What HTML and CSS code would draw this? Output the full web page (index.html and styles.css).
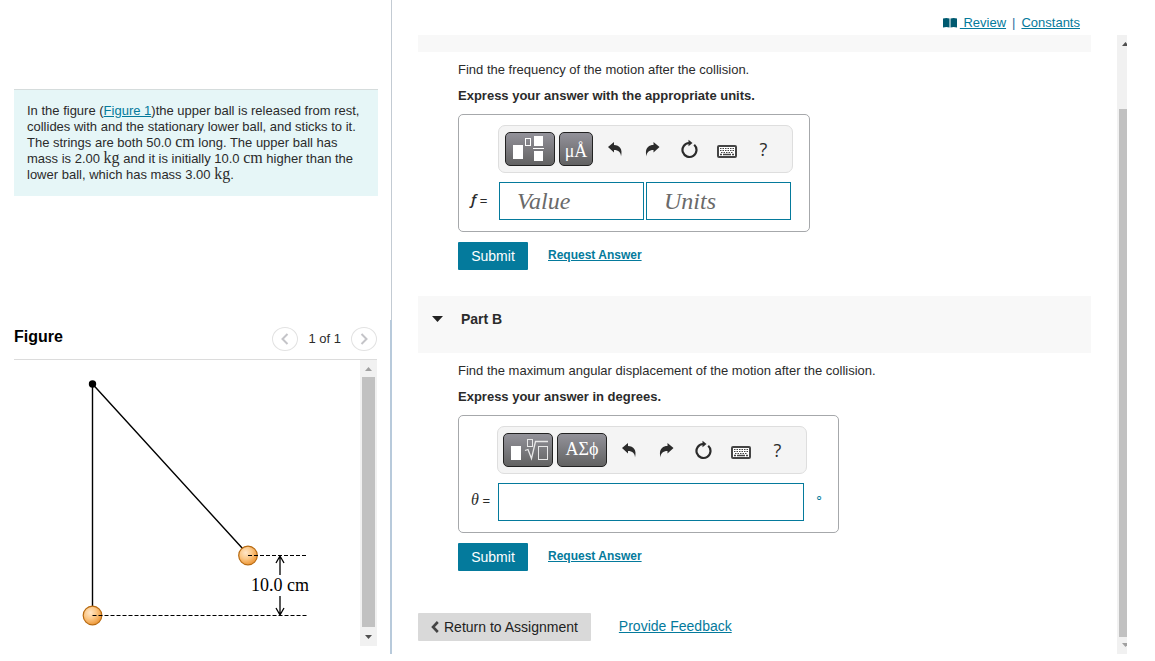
FILE: index.html
```html
<!DOCTYPE html>
<html lang="en">
<head>
    <meta charset="UTF-8">
    <meta name="viewport" content="width=device-width, initial-scale=1.0">
    <title>Assignment - Part B</title>
    <link rel="stylesheet" href="styles.css">
</head>
<body>
    <!-- Shared toolbar icons -->
    <svg class="sprite" aria-hidden="true">
        <symbol id="icon-undo" viewBox="0 0 16 16">
            <path d="M0 6 L6 1 V4 C11.500 4 15 8 13 15.500 C13 11.500 10.500 9 6 9 V11.500 Z"/>
        </symbol>
        <symbol id="icon-redo" viewBox="0 0 16 16">
            <path d="M14.500 6 L8.500 1 V4 C3 4 -0.500 8 1.500 15.500 C1.500 11.500 4 9 8.500 9 V11.500 Z"/>
        </symbol>
        <symbol id="icon-reset" viewBox="0 0 18 20">
            <path d="M13.200 5.800 A7 7 0 1 1 8 4" fill="none" stroke="#2b2b2b" stroke-width="2.200"/>
            <path d="M7.500 0.800 L11.500 4 L7.500 7.200 Z"/>
        </symbol>
        <symbol id="icon-keyboard" viewBox="0 0 20 13">
            <rect x="1" y="1" width="18" height="11" rx="1" fill="#fff" stroke="#444" stroke-width="2"/>
            <path d="M3 3.500h14M3 5.500h14M4 7.500h12" stroke="#444" stroke-width="1.200" stroke-dasharray="1.500 1"/>
            <path d="M3 9.500h2M6 9.500h8M15 9.500h2" stroke="#444" stroke-width="1.500"/>
        </symbol>
    </svg>

    <div class="page">
        <aside class="sidebar">
            <div class="intro">
                <p class="problem">In the figure (<a href="#figure">Figure 1</a>)the upper ball is released from rest, collides with and the stationary lower ball, and sticks to it. The strings are both 50.0 <span class="unit">cm</span> long. The upper ball has mass is 2.00 <span class="unit">kg</span> and it is initially 10.0 <span class="unit">cm</span> higher than the lower ball, which has mass 3.00 <span class="unit">kg</span>.</p>
            </div>

            <section class="figure" id="figure">
                <header class="figure-header">
                    <h2>Figure</h2>
                    <div class="pager">
                        <button type="button" class="pager-btn" aria-label="Previous figure">
                            <svg width="8" height="12" viewBox="0 0 8 12"><path d="M6.500 1 L1.500 6 L6.500 11"/></svg>
                        </button>
                        <span>1 of 1</span>
                        <button type="button" class="pager-btn" aria-label="Next figure">
                            <svg width="8" height="12" viewBox="0 0 8 12"><path d="M1.500 1 L6.500 6 L1.500 11"/></svg>
                        </button>
                    </div>
                </header>
                <div class="figure-body">
                    <svg class="diagram" width="320" height="286" viewBox="0 0 320 286">
                        <defs>
                            <radialGradient id="ball" cx="0.38" cy="0.35" r="0.65">
                                <stop offset="0" stop-color="#ffe6c8"/>
                                <stop offset="0.5" stop-color="#fbc888"/>
                                <stop offset="1" stop-color="#ee9a3c"/>
                            </radialGradient>
                        </defs>
                        <!-- Strings -->
                        <path d="M78.500 24 V246 M78.500 24 L229 189" stroke="#000" stroke-width="1.400"/>
                        <circle cx="78.500" cy="24" r="3.700"/>
                        <!-- Balls -->
                        <circle cx="78.500" cy="255.500" r="9.300" fill="url(#ball)" stroke="#b86a10" stroke-width="1.200"/>
                        <circle cx="234" cy="195.500" r="9.300" fill="url(#ball)" stroke="#b86a10" stroke-width="1.200"/>
                        <path d="M234 195.500 H293 M78.500 255.500 H293" stroke="#000" stroke-width="1.200" stroke-dasharray="4 2"/>
                        <!-- Height marker -->
                        <path d="M266 196 V215 M262 203 L266 196 L270 203 M266 236 V255 M262 248 L266 255 L270 248" fill="none" stroke="#000" stroke-width="1.300"/>
                        <text x="266" y="231" text-anchor="middle">10.0 cm</text>
                    </svg>
                    <div class="scrollbar" aria-hidden="true">
                        <svg width="17" height="17" viewBox="0 0 17 17"><path d="M5 11 h7 l-3.500 -4 z" fill="#a0a0a0"/></svg>
                        <div class="thumb"></div>
                        <svg width="17" height="19" viewBox="0 0 17 19"><path d="M5 8 h7 l-3.500 4 z" fill="#505050"/></svg>
                    </div>
                </div>
            </section>
        </aside>

        <main class="main">
            <nav class="top-links">
                <svg width="14" height="10" viewBox="0 0 14 10"><path d="M0 0.500 Q3.500 -0.500 6.500 0.500 V9.500 Q3.500 8.500 0 9.500 Z M7.500 0.500 Q10.500 -0.500 14 0.500 V9.500 Q10.500 8.500 7.500 9.500 Z"/></svg>
                <a class="review" href="#review">&nbsp;Review</a>
                <span class="divider">|</span>
                <a href="#constants">Constants</a>
            </nav>

            <div class="scroll-area">
                <div class="content">
                    <div class="part-strip"></div>

                    <form class="part">
                        <p>Find the frequency of the motion after the collision.</p>
                        <p><strong>Express your answer with the appropriate units.</strong></p>
                        <div class="answer-box">
                            <div class="toolbar">
                                <button type="button" class="tool" aria-label="Templates">
                                    <svg width="34" height="28" viewBox="0 0 34 28">
                                        <path d="M0 10h10v14h-10z M21 1h9v10h-9z M21 16h9v10h-9z M20 13h11v1h-11z" fill="#fff"/>
                                        <rect x="12.500" y="3.500" width="5" height="7" fill="none" stroke="#fff"/>
                                    </svg>
                                </button>
                                <button type="button" class="tool tool-units">μÅ</button>
                                <div class="icons">
                                    <button type="button" aria-label="Undo"><svg width="16" height="16"><use href="#icon-undo"/></svg></button>
                                    <button type="button" aria-label="Redo"><svg width="16" height="16"><use href="#icon-redo"/></svg></button>
                                    <button type="button" aria-label="Reset"><svg width="18" height="20"><use href="#icon-reset"/></svg></button>
                                    <button type="button" aria-label="Keyboard shortcuts"><svg class="keyboard" width="20" height="13"><use href="#icon-keyboard"/></svg></button>
                                    <button type="button" aria-label="Help">?</button>
                                </div>
                            </div>
                            <label for="frequency"><i class="var">f</i> =</label>
                            <div class="fields">
                                <input type="text" id="frequency" class="quantity" placeholder="Value">
                                <input type="text" id="units" class="quantity" placeholder="Units" aria-label="Units">
                            </div>
                        </div>
                        <div class="actions">
                            <button type="submit" class="submit">Submit</button>
                            <a href="#answer-a">Request Answer</a>
                        </div>
                    </form>

                    <header class="part-header">
                        <svg width="12" height="6" viewBox="0 0 12 6"><path d="M0 0 H11 L5.500 6 Z" fill="#222"/></svg>
                        <h3>Part B</h3>
                    </header>

                    <form class="part">
                        <p>Find the maximum angular displacement of the motion after the collision.</p>
                        <p><strong>Express your answer in degrees.</strong></p>
                        <div class="answer-box answer-box-wide">
                            <div class="toolbar">
                                <button type="button" class="tool" aria-label="Math templates">
                                    <svg width="42" height="28" viewBox="0 0 42 28">
                                        <path d="M4 10h10v14h-10z" fill="#fff"/>
                                        <g fill="none" stroke="#e8e8e8">
                                            <rect x="20.500" y="3.500" width="5" height="7"/>
                                            <path d="M18 14.500 l3 -1 l3.500 9 l4 -17 H41" stroke-width="1.300"/>
                                            <rect x="31.500" y="10.500" width="9" height="13"/>
                                        </g>
                                    </svg>
                                </button>
                                <button type="button" class="tool tool-greek">ΑΣϕ</button>
                                <div class="icons">
                                    <button type="button" aria-label="Undo"><svg width="16" height="16"><use href="#icon-undo"/></svg></button>
                                    <button type="button" aria-label="Redo"><svg width="16" height="16"><use href="#icon-redo"/></svg></button>
                                    <button type="button" aria-label="Reset"><svg width="18" height="20"><use href="#icon-reset"/></svg></button>
                                    <button type="button" aria-label="Keyboard shortcuts"><svg class="keyboard" width="20" height="13"><use href="#icon-keyboard"/></svg></button>
                                    <button type="button" aria-label="Help">?</button>
                                </div>
                            </div>
                            <label for="theta"><i class="theta">θ</i> =</label>
                            <div class="fields">
                                <input type="text" id="theta" class="angle">
                                <span class="degree">∘</span>
                            </div>
                        </div>
                        <div class="actions">
                            <button type="submit" class="submit">Submit</button>
                            <a href="#answer-b">Request Answer</a>
                        </div>
                    </form>

                    <footer class="bottom">
                        <button type="button" class="return">
                            <svg width="8" height="12" viewBox="0 0 8 12"><path d="M6.800 1 L2 6 L6.800 11" fill="none" stroke="#444" stroke-width="2.600"/></svg>
                            Return to Assignment
                        </button>
                        <a href="#feedback">Provide Feedback</a>
                    </footer>
                </div>

                <div class="scrollbar scrollbar-main" aria-hidden="true">
                    <svg width="17" height="17" viewBox="0 0 17 17"><path d="M5 11 h7 l-3.500 -4 z" fill="#505050"/></svg>
                    <div class="track-gap"></div>
                    <div class="thumb"></div>
                    <svg width="17" height="17" viewBox="0 0 17 17"><path d="M5 6 h7 l-3.500 4 z" fill="#a0a0a0"/></svg>
                </div>
            </div>
        </main>
    </div>
</body>
</html>
```

FILE: styles.css
```css
* {
    box-sizing: border-box;
}

body {
    margin: 0;
    font-family: "Liberation Sans", Arial, sans-serif;
    font-size: 13px;
    line-height: 16px;
    color: #2b2b2b;
    background-color: #fff;
}

p, h2, h3 {
    margin: 0;
}

a {
    color: #047a9c;
}

button {
    font-family: inherit;
    padding: 0;
    border: none;
    cursor: pointer;
}

svg {
    display: block;
    flex-shrink: 0;
}

.sprite {
    position: absolute;
    width: 0;
    height: 0;
}

.page {
    display: flex;
    min-height: calc(100vh - 7px);
}

/* Left column */
.sidebar {
    display: flex;
    flex-direction: column;
    flex: 0 0 392px;
}

.intro {
    height: 320px;
    padding: 89px 13px 0 14px;
    border-right: 1px solid #c3cbd3;
}

.problem {
    padding: 13px 12px 13px 13px;
    border-top: 1px solid #d5dcdc;
    background-color: #e6f6f7;
}

.unit {
    font-family: "Liberation Serif", serif;
    font-size: 16px;
    line-height: 14px;
}

.figure {
    flex: 1;
    display: flex;
    flex-direction: column;
    padding: 0 13px 8px 14px;
    border-right: 2px solid #b8cadb;
}

.figure-header {
    display: flex;
    justify-content: space-between;
    height: 40px;
    padding-top: 7px;
    border-bottom: 1px solid #dcdcdc;
}

.figure-header h2 {
    font-size: 16px;
    line-height: 20px;
    color: #000;
}

.pager {
    display: flex;
    align-items: center;
    gap: 10px;
    height: 24px;
}

.pager-btn {
    display: flex;
    align-items: center;
    justify-content: center;
    width: 26px;
    height: 24px;
    border: 1px solid #e2e2e2;
    border-radius: 50%;
    background-color: #fff;
}

.pager-btn path {
    fill: none;
    stroke: #c4c4c8;
    stroke-width: 2;
}

.figure-body {
    display: flex;
    justify-content: space-between;
    flex: 1;
}

.diagram text {
    font-family: "Liberation Serif", serif;
    font-size: 18px;
}

.scrollbar {
    display: flex;
    flex-direction: column;
    width: 17px;
    overflow: hidden;
    background-color: #f1f1f1;
}

.thumb {
    flex: 1;
    margin: 0 2px;
    background-color: #c1c1c1;
}

/* Right column */
.main {
    flex: 1;
    display: flex;
    flex-direction: column;
    padding: 0 28px 0 26px;
}

.top-links {
    display: flex;
    align-items: center;
    justify-content: flex-end;
    height: 35px;
    padding: 10px 47px 0 0;
}

.top-links svg {
    margin-right: 3px;
    fill: #005a70;
}

.divider {
    margin: 0 6px;
    color: #2f6f9f;
}

.scroll-area {
    flex: 1;
    display: flex;
    gap: 26px;
}

.content {
    flex: 1;
}

.scrollbar-main {
    width: 10px;
}

.scrollbar-main .thumb {
    margin-right: 0;
}

.track-gap {
    height: 57px;
}

.part-strip {
    height: 17px;
    background-color: #f8f8f8;
}

.part-header {
    display: flex;
    align-items: center;
    gap: 17px;
    height: 57px;
    padding: 0 14px 11px 14px;
    background-color: #f8f8f8;
}

.part-header h3 {
    font-size: 14px;
    line-height: 16px;
}

.part {
    padding: 10px 0 26px 40px;
}

.part p {
    margin-bottom: 10px;
}

/* Answer box */
.answer-box {
    display: inline-grid;
    grid-template-columns: 39px auto;
    row-gap: 9px;
    padding: 10px 16px 11px 0;
    border: 1px solid #a6a8ab;
    border-radius: 5px;
    vertical-align: top;
}

.answer-box-wide {
    grid-template-columns: 38px auto;
    padding-right: 15px;
}

.answer-box label {
    height: 38px;
    padding-left: 12px;
    line-height: 34px;
    white-space: nowrap;
}

.var {
    font-family: "Open Sans", sans-serif;
    font-size: 15px;
    font-weight: 600;
}

.theta {
    font-family: "Liberation Serif", serif;
    font-size: 16px;
}

.toolbar {
    grid-column: 2;
    justify-self: start;
    display: flex;
    align-items: center;
    gap: 4px;
    height: 48px;
    padding: 0 10px 0 6px;
    border: 1px solid #dedede;
    border-radius: 7px;
    background-color: #f4f4f4;
}

.answer-box-wide .toolbar {
    padding-left: 5px;
}

.tool {
    display: flex;
    align-items: center;
    justify-content: center;
    width: 50px;
    height: 34px;
    border: 1px solid #222;
    border-radius: 5px;
    background-image: linear-gradient(#93929a, #626262);
    color: #fff;
    font-family: "Liberation Serif", serif;
    font-size: 18px;
}

.tool-units {
    width: 34px;
    padding-top: 4px;
}

.tool-greek {
    padding-bottom: 2px;
}

.icons {
    display: flex;
}

.icons button {
    display: flex;
    align-items: center;
    justify-content: center;
    width: 37px;
    height: 34px;
    background: none;
    color: #2b2b2b;
    font-family: "Open Sans", sans-serif;
    font-size: 18px;
}

.icons svg {
    fill: #2b2b2b;
}

.icons .keyboard {
    margin-top: 4px;
}

.fields {
    display: flex;
    gap: 2px;
    padding-left: 1px;
}

.fields input {
    height: 38px;
    padding: 0 17px;
    border: 1px solid #047a9c;
    border-radius: 0;
    background-color: #fff;
    font-family: "Liberation Serif", serif;
    font-size: 24px;
    font-style: italic;
}

.fields input::placeholder {
    color: #6a6a6a;
}

.quantity {
    width: 145px;
}

.angle {
    width: 306px;
}

.degree {
    padding: 6px 0 0 9px;
    color: #047a9c;
}

.actions {
    display: flex;
    gap: 20px;
    margin-top: 10px;
}

.actions a {
    font-size: 12px;
    font-weight: bold;
    line-height: 26px;
}

.submit {
    width: 70px;
    height: 28px;
    border-radius: 1px;
    background-color: #047a9c;
    color: #fff;
    font-size: 14px;
}

.bottom {
    display: flex;
    gap: 28px;
    padding-top: 16px;
    font-size: 14px;
    line-height: 26px;
}

.return {
    display: flex;
    align-items: center;
    gap: 5px;
    height: 28px;
    padding: 0 13px;
    border-radius: 1px;
    background-color: #d9d9d9;
    color: #222;
    font-size: 14px;
}
```
